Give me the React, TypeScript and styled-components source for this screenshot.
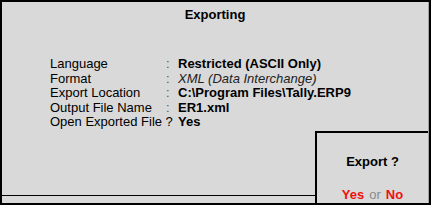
import React from 'react';
import styled, { createGlobalStyle } from 'styled-components';

const GlobalStyle = createGlobalStyle`
  html, body {
    margin: 0;
    padding: 0;
    background: #ffffff;
  }
  body {
    font-family: "Liberation Sans", Arial, sans-serif;
    font-size: 13px;
    line-height: 15px;
    color: #000;
  }
`;

interface Field {
  label: string;
  value: string;
  italic?: boolean;
  noColon?: boolean;
}

const fields: Field[] = [
  { label: 'Language', value: 'Restricted (ASCII Only)' },
  { label: 'Format', value: 'XML (Data Interchange)', italic: true },
  { label: 'Export Location', value: 'C:\\Program Files\\Tally.ERP9' },
  { label: 'Output File Name', value: 'ER1.xml' },
  { label: 'Open Exported File ?', value: 'Yes', noColon: true },
];

const App: React.FC = () => {
  return (
    <>
      <GlobalStyle />
      <Frame>
        <Panel>
          <TopSection>
            <Title>Exporting</Title>
            <FieldGrid>
              {fields.map((f) => (
                <React.Fragment key={f.label}>
                  <Label $span={f.noColon}>{f.label}</Label>
                  {!f.noColon && <Colon>:</Colon>}
                  <Value $italic={f.italic}>{f.value}</Value>
                </React.Fragment>
              ))}
            </FieldGrid>
          </TopSection>
          <BottomRow>
            <Rule />
            <ExportBox>
              <ExportTitle>Export ?</ExportTitle>
              <Choices>
                <Choice>Yes</Choice>
                <Or>or</Or>
                <Choice>No</Choice>
              </Choices>
            </ExportBox>
          </BottomRow>
        </Panel>
      </Frame>
    </>
  );
};

const Frame = styled.div`
  width: 431px;
  height: 205px;
  box-sizing: border-box;
  border: 2px solid #000;
  background: #d9d9d9;
`;

const Panel = styled.div`
  height: 100%;
  box-sizing: border-box;
  border-right: 1px solid #a3a3a3;
  display: flex;
  flex-direction: column;
`;

const TopSection = styled.div`
  height: 129px;
  flex-shrink: 0;
`;

const Title = styled.div`
  padding-top: 5px;
  text-align: center;
  font-weight: bold;
`;

const FieldGrid = styled.div`
  margin-top: 34px;
  padding-left: 48px;
  display: grid;
  grid-template-columns: 116px 12px auto;
  grid-auto-rows: 14.6px;
`;

const Label = styled.div<{ $span?: boolean }>`
  grid-column: ${(p) => (p.$span ? '1 / span 2' : 'auto')};
  white-space: nowrap;
  color: #000;
`;

const Colon = styled.div`
  color: #555;
`;

const Value = styled.div<{ $italic?: boolean }>`
  white-space: nowrap;
  font-weight: ${(p) => (p.$italic ? 'normal' : 'bold')};
  font-style: ${(p) => (p.$italic ? 'italic' : 'normal')};
  color: ${(p) => (p.$italic ? '#222' : '#000')};
`;

const BottomRow = styled.div`
  flex: 1;
  display: flex;
  align-items: flex-end;
`;

const Rule = styled.div`
  flex: 1;
  border-bottom: 1px solid #000;
  margin-bottom: 7px;
`;

const ExportBox = styled.div`
  width: 113px;
  height: 100%;
  box-sizing: border-box;
  border-left: 2px solid #000;
  border-top: 2px solid #000;
  padding-top: 21px;
  display: flex;
  flex-direction: column;
  align-items: center;
`;

const ExportTitle = styled.div`
  font-weight: bold;
`;

const Choices = styled.div`
  margin-top: 18px;
  display: flex;
  gap: 5px;
`;

const Choice = styled.span`
  color: #f01010;
  font-weight: bold;
`;

const Or = styled.span`
  color: #8a8a8a;
`;

export default App;
